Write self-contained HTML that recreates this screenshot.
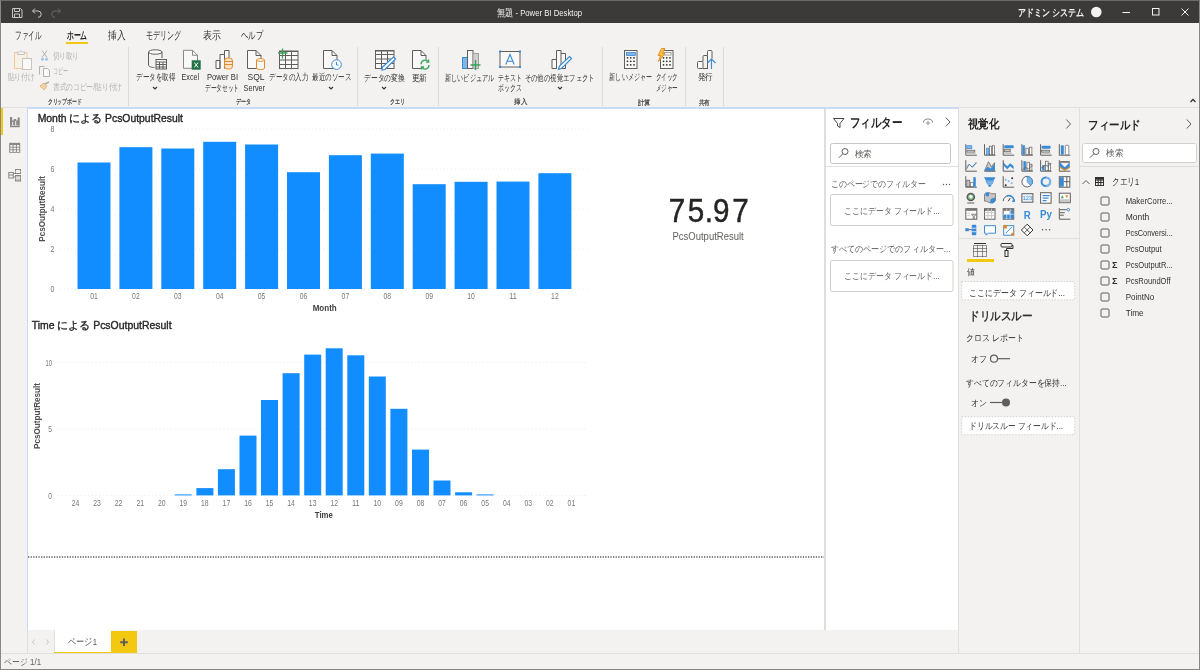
<!DOCTYPE html>
<html><head><meta charset="utf-8"><title>Power BI Desktop</title>
<style>
*{margin:0;padding:0;box-sizing:border-box}
html,body{width:1200px;height:670px;overflow:hidden;background:#f3f2f1;font-family:"Liberation Sans",sans-serif}
.a{position:absolute}
</style></head><body>
<div class="a" style="left:0px;top:0px;width:1200px;height:23px;background:#3b3a39;"></div><div class="a" style="left:0px;top:23px;width:1200px;height:85px;background:#f3f2f1;"></div><div class="a" style="left:0px;top:108px;width:28px;height:545px;background:#f3f2f1;"></div><div class="a" style="left:0px;top:107px;width:1200px;height:1px;background:#e1dfdd;"></div><div class="a" style="left:27px;top:107px;width:932px;height:2px;background:#cadcf4;"></div><div class="a" style="left:27px;top:108px;width:1px;height:522px;background:#c7dbf5;"></div><div class="a" style="left:28px;top:109px;width:797px;height:521px;background:#fff;"></div><div class="a" style="left:826px;top:109px;width:133px;height:521px;background:#fff;"></div><div class="a" style="left:824px;top:109px;width:2px;height:521px;background:#dfdedd;"></div><div class="a" style="left:958px;top:108px;width:1px;height:545px;background:#e1dfdd;"></div><div class="a" style="left:1079px;top:108px;width:1px;height:545px;background:#e1dfdd;"></div><div class="a" style="left:0px;top:653px;width:1200px;height:1px;background:#e1dfdd;"></div><div class="a" style="left:66px;top:42px;width:22px;height:2px;background:#f2c811;"></div><div class="a" style="left:128px;top:47px;width:1px;height:59px;background:#dcdad8;"></div><div class="a" style="left:357px;top:47px;width:1px;height:59px;background:#dcdad8;"></div><div class="a" style="left:438px;top:47px;width:1px;height:59px;background:#dcdad8;"></div><div class="a" style="left:602px;top:47px;width:1px;height:59px;background:#dcdad8;"></div><div class="a" style="left:685px;top:47px;width:1px;height:59px;background:#dcdad8;"></div><div class="a" style="left:723px;top:47px;width:1px;height:59px;background:#dcdad8;"></div><div class="a" style="left:1px;top:108px;width:2px;height:27px;background:#f2c811;"></div><div class="a" style="left:27px;top:630px;width:1px;height:23px;background:#e1dfdd;"></div><div class="a" style="left:54px;top:630px;width:57px;height:23px;background:#fff;"></div><div class="a" style="left:54px;top:630px;width:1px;height:23px;background:#e1dfdd;"></div><div class="a" style="left:54px;top:651.5px;width:57px;height:1.5px;background:#f2c811;"></div><div class="a" style="left:111px;top:631px;width:26px;height:22px;background:#f2c811;"></div>
<svg class="a" style="left:0;top:0;will-change:transform" width="1200" height="670" viewBox="0 0 1200 670" font-family="Liberation Sans"><g fill="none" stroke="#c8c6c4" stroke-width="1">
<path d="M12.5 8.5h8l1.5 1.5v7.5h-9.5z"/><path d="M14.5 8.5v3h5v-3"/><path d="M14.5 17.5v-3.5h5v3.5"/>
<path d="M35 10.5l-2.5 2.5 2.5 2.5M32.8 13h5.2a3.2 3.2 0 0 1 0 6.4" transform="translate(0 -2)"/>
</g>
<g fill="none" stroke="#6b6a69" stroke-width="1"><path d="M58 10.5l2.5 2.5-2.5 2.5M60.2 13h-5.2a3.2 3.2 0 0 0 0 6.4" transform="translate(0 -2)"/></g>
<circle cx="1096.3" cy="12" r="5.3" fill="#f3f2f1"/>
<g stroke="#f3f2f1" stroke-width="1" fill="none">
<path d="M1122.5 12.5h7.5"/><rect x="1152.5" y="8.5" width="6.5" height="6.5"/><path d="M1181.5 8.5l7 7M1188.5 8.5l-7 7"/>
</g>
<g fill="none" stroke="#323130" stroke-width="1.1"><path d="M153 87l2 2 2-2"/><path d="M329 87l2 2 2-2"/><path d="M382 87l2 2 2-2"/><path d="M558 87l2 2 2-2"/></g><path d="M1190.5 102l2.5-2.5 2.5 2.5" fill="none" stroke="#323130" stroke-width="1.3"/>

<g fill="none" stroke-width="1">
<!-- paste -->
<rect x="14.5" y="52.5" width="12.5" height="16" fill="#f8f1e6" stroke="#f2c999"/>
<path d="M17.5 54.5h7v-2.5h-2l-1.5-1.5-1.5 1.5h-2z" fill="#f3f2f1" stroke="#c8c6c4"/>
<rect x="22.5" y="58.5" width="9" height="11" fill="#faf9f8" stroke="#c8c6c4"/>
<!-- scissors -->
<path d="M42 50.5l5 7M47 50.5l-5 7" stroke="#b3b0ad"/>
<circle cx="42.5" cy="59.3" r="1.5" fill="#9fc3ea" stroke="none"/><circle cx="46.5" cy="59.3" r="1.5" fill="#9fc3ea" stroke="none"/>
<!-- copy -->
<path d="M39.5 74.5v-8h5" stroke="#b3b0ad"/><path d="M43.5 68.5h4l2 2v6h-6z" stroke="#b3b0ad" fill="#faf9f8"/>
<!-- format painter -->
<path d="M40 86l4-3 3 3-3 4z" fill="#f2d4a8" stroke="#eab676"/><path d="M45 84l4-2" stroke="#b3b0ad" stroke-width="1.5"/>
</g>
<g fill="none" stroke="#605e5c" stroke-width="1">
<!-- get data -->
<path d="M148.5 52v13c0 1.5 3 2.5 6 2.5" /><path d="M162 52v6"/><ellipse cx="155.25" cy="52" rx="6.75" ry="2.2" fill="#faf9f8"/>
<rect x="156" y="59.5" width="10.5" height="9.5" fill="#faf9f8"/>
<path d="M156 62h10.5M156 64.5h10.5M156 67h10.5M159.5 62v7M163 62v7"/>
<!-- excel -->
<path d="M183.5 50.3h9l5 5v13h-14z" fill="#faf9f8" stroke="#8a8886"/><path d="M192.5 50.3v5h5" stroke="#8a8886"/>
<rect x="191.7" y="60.3" width="9" height="9.4" fill="#1e7145" stroke="none"/>
<path d="M194.3 62.5l3.8 5M198.1 62.5l-3.8 5" stroke="#fff" stroke-width="1"/>
<!-- power bi dataset -->
<path d="M216 68.5v-8h4v8zM220 68.5v-14h4.5v14M224.5 57.5v-7h4.5v7.5" fill="#faf9f8"/>
<g stroke="#e38b2c"><rect x="224.5" y="58" width="8" height="11" rx="3" fill="#fbe5c8"/><path d="M224.5 61.5h8M224.5 64.5h8"/></g>
<!-- SQL -->
<path d="M247.5 50.5h8.5l5 5v13h-13.5z" fill="#faf9f8"/><path d="M256 50.5v5h5"/>
<g stroke="#e38b2c"><path d="M256.5 60v8c0 1 1.7 1.5 4 1.5s4-.5 4-1.5v-8" fill="#faf9f8"/><ellipse cx="260.5" cy="60" rx="4" ry="1.4" fill="#faf9f8"/></g>
<!-- enter data -->
<rect x="279.5" y="51" width="18.5" height="17.5" fill="#faf9f8"/>
<path d="M279.5 55.5h18.5M279.5 60h18.5M279.5 64.5h18.5M285.5 51v17.5M291.5 51v17.5"/>
<path d="M279.5 51.5h18.5" stroke="#605e5c"/>
<path d="M282.5 48.5v10M278 53h9.5" stroke="#38a25a" stroke-width="1.3"/>
<!-- recent sources -->
<path d="M323.5 50.5h8.5l5 5v13h-13.5z" fill="#faf9f8"/><path d="M332 50.5v5h5"/>
<circle cx="336.5" cy="64.6" r="4.8" fill="#fff" stroke="#3a8bd6"/><path d="M336.5 62v3h2" stroke="#3a8bd6"/>
<!-- transform -->
<rect x="375.5" y="50.5" width="18.5" height="18" fill="#faf9f8"/>
<path d="M375.5 54.5h18.5M375.5 59h18.5M375.5 63.5h18.5M381.5 50.5v18M387.5 50.5v18"/>
<path d="M375.5 51h18.5" stroke="#605e5c"/>
<path d="M393.5 57l2 2-10.5 10.5-3 .5.5-3z" fill="#fff" stroke="#3a8bd6" stroke-width="1.2"/>
<!-- refresh -->
<path d="M412.5 50.5h8.5l5 5v13h-13.5z" fill="#faf9f8"/><path d="M421 50.5v5h5"/>
<circle cx="425" cy="64.6" r="5.2" fill="#f3f2f1" stroke="none"/><g stroke="#38a25a" stroke-width="1.3"><path d="M421 64.2a4 4 0 0 1 7.2-2.4M429 65a4 4 0 0 1-7.2 2.4"/><path d="M428.6 59.6v2.6h-2.6M421.4 69.6v-2.6h2.6"/></g>
<!-- new visual -->
<rect x="462.5" y="57.5" width="5" height="11" fill="#7fb5ea" stroke="#3a8bd6"/>
<rect x="467.5" y="50.5" width="5.5" height="18" fill="#faf9f8"/>
<rect x="473" y="53.5" width="5.5" height="15" fill="#d2d0ce" stroke="#a19f9d"/>
<path d="M475.5 60v10M470.5 65h10" stroke="#38a25a" stroke-width="1.4"/>
<!-- textbox -->
<rect x="500" y="51.5" width="20" height="15.5" fill="#faf9f8" stroke="#605e5c"/>
<g fill="#3a8bd6" stroke="none"><rect x="499" y="50.5" width="2" height="2"/><rect x="519" y="50.5" width="2" height="2"/><rect x="499" y="66" width="2" height="2"/><rect x="519" y="66" width="2" height="2"/></g>
<path d="M505.8 64.5l4.2-10 4.2 10M507.2 61.2h5.6" stroke="#3a8bd6" stroke-width="1.1"/>
<!-- more visuals -->
<path d="M552 68.5v-9h4.5v9zM556.5 68.5v-18h4.5v18M561 53.5h4.5v15h-4.5" fill="#faf9f8"/>
<path d="M569.5 56.5l2 2-10 10-3 .8.8-3z" fill="#fff" stroke="#3a8bd6" stroke-width="1.2"/>
<!-- new measure -->
<rect x="624.5" y="50.5" width="12.5" height="18" fill="#faf9f8"/>
<rect x="626.3" y="52.5" width="9" height="3" fill="#7fb5ea" stroke="#3a8bd6" stroke-width=".8"/>
<g fill="#323130" stroke="none">
<circle cx="627.5" cy="57.8" r=".9"/><circle cx="630.75" cy="57.8" r=".9"/><circle cx="634" cy="57.8" r=".9"/>
<circle cx="627.5" cy="61.3" r=".9"/><circle cx="630.75" cy="61.3" r=".9"/><circle cx="634" cy="61.3" r=".9"/>
<circle cx="627.5" cy="64.8" r=".9"/><circle cx="630.75" cy="64.8" r=".9"/><circle cx="634" cy="64.8" r=".9"/></g>
<!-- quick measure -->
<rect x="660.5" y="50.5" width="12.5" height="18" fill="#faf9f8"/>
<rect x="664" y="52.5" width="7" height="2.5" fill="#fff" stroke="#8a8886" stroke-width=".8"/>
<g fill="#323130" stroke="none">
<circle cx="663.5" cy="57.8" r=".9"/><circle cx="666.75" cy="57.8" r=".9"/><circle cx="670" cy="57.8" r=".9"/>
<circle cx="663.5" cy="61.3" r=".9"/><circle cx="666.75" cy="61.3" r=".9"/><circle cx="670" cy="61.3" r=".9"/>
<circle cx="663.5" cy="64.8" r=".9"/><circle cx="666.75" cy="64.8" r=".9"/><circle cx="670" cy="64.8" r=".9"/></g>
<path d="M661.5 48.5h3.5l-2.5 5h2.5l-6.5 8 2-6h-2.5z" fill="#f9c23c" stroke="#e38b2c" stroke-width=".9"/>
<!-- publish -->
<rect x="697.5" y="61.5" width="5.5" height="7" rx="1" fill="#faf9f8"/><path d="M703 61.5v-5a1 1 0 0 1 1-1h3.5M703 68.5h5" /><path d="M707.5 55.5v-4a1 1 0 0 1 1-1h2.5a1 1 0 0 1 1 1v7" fill="#faf9f8"/><path d="M707.5 55.5v13"/>
<path d="M711.5 69v-9.5M707.5 63l4-4 4 4" stroke="#3a8bd6" stroke-width="1.1"/>
</g>
<g fill="#8a8886" stroke="none">
<path d="M10 117h2.2v3.5h1.5v-1.5h2.5v1.5h1.5v-3h2v9.8h-9.7z"/>
<g fill="#f3f2f1"><rect x="12.2" y="122" width="1" height="3.5"/><rect x="15.2" y="121" width="1" height="4.5"/><rect x="11" y="125" width="7.7" height=".8" opacity=".6"/></g>
<rect x="9.2" y="142.8" width="11" height="10" fill="#8a8886"/>
<g fill="#f3f2f1"><rect x="10.3" y="145" width="2.3" height="1.8"/><rect x="13.6" y="145" width="2.3" height="1.8"/><rect x="16.9" y="145" width="2.3" height="1.8"/>
<rect x="10.3" y="147.6" width="2.3" height="1.8"/><rect x="13.6" y="147.6" width="2.3" height="1.8"/><rect x="16.9" y="147.6" width="2.3" height="1.8"/>
<rect x="10.3" y="150.2" width="2.3" height="1.8"/><rect x="13.6" y="150.2" width="2.3" height="1.8"/><rect x="16.9" y="150.2" width="2.3" height="1.8"/></g>
</g>
<g fill="none" stroke="#8a8886" stroke-width="1">
<rect x="15.5" y="169.5" width="5" height="4"/><rect x="8.8" y="172.5" width="4.5" height="5.5"/><path d="M8.8 175h4.5M13.3 173.5h2.2M13.3 177h2.2"/>
<rect x="15.5" y="175.5" width="5" height="5.5" fill="#c8c6c4"/><path d="M15.5 171.5h5M15.5 178h5" stroke="#f3f2f1"/>
</g>
<g stroke="#ebebeb" stroke-width="1" stroke-dasharray="1 2.76"><line x1="60" x2="589" y1="129" y2="129"/><line x1="60" x2="589" y1="169" y2="169"/><line x1="60" x2="589" y1="209" y2="209"/><line x1="60" x2="589" y1="249" y2="249"/><line x1="60" x2="589" y1="289" y2="289"/><line x1="58" x2="587" y1="362.5" y2="362.5"/><line x1="58" x2="587" y1="429" y2="429"/><line x1="58" x2="587" y1="495.5" y2="495.5"/></g>
<g fill="#118dff"><rect x="77.5" y="162.5" width="33" height="126.5"/><rect x="119.4" y="147.2" width="33" height="141.8"/><rect x="161.3" y="148.5" width="33" height="140.5"/><rect x="203.2" y="141.8" width="33" height="147.2"/><rect x="245.1" y="144.5" width="33" height="144.5"/><rect x="287.0" y="172.2" width="33" height="116.8"/><rect x="328.9" y="155.2" width="33" height="133.8"/><rect x="370.8" y="153.6" width="33" height="135.4"/><rect x="412.7" y="184.2" width="33" height="104.8"/><rect x="454.6" y="181.8" width="33" height="107.2"/><rect x="496.5" y="181.6" width="33" height="107.4"/><rect x="538.4" y="173.2" width="33" height="115.8"/><rect x="174.8" y="494.4" width="17" height="1.0"/><rect x="196.4" y="488.1" width="17" height="7.3"/><rect x="217.9" y="469.2" width="17" height="26.2"/><rect x="239.5" y="435.6" width="17" height="59.8"/><rect x="261.0" y="400.0" width="17" height="95.4"/><rect x="282.6" y="373.2" width="17" height="122.2"/><rect x="304.2" y="354.6" width="17" height="140.8"/><rect x="325.7" y="348.3" width="17" height="147.1"/><rect x="347.3" y="355.3" width="17" height="140.1"/><rect x="368.8" y="376.5" width="17" height="118.9"/><rect x="390.4" y="408.8" width="17" height="86.6"/><rect x="412.0" y="449.6" width="17" height="45.8"/><rect x="433.5" y="480.5" width="17" height="14.9"/><rect x="455.1" y="492.3" width="17" height="3.1"/><rect x="476.6" y="494.4" width="17" height="1.0"/></g>
<g stroke="#5f5e5d" stroke-width="1.3" stroke-dasharray="1.3 1.3"><line x1="28" x2="824" y1="557" y2="557"/></g>
<g fill="none" stroke="#323130" stroke-width="1">
<path d="M833.5 118.5h10.5l-4 5v4l-2.5-1.5v-2.5z" stroke="#484644"/>
</g>
<g fill="none" stroke="#8a8886" stroke-width="1">
<path d="M923.5 122.5a4.5 3.5 0 0 1 9 0"/><circle cx="928" cy="123" r="1.2"/>
<path d="M945.8 117.5l4.2 4.5-4.2 4.5" stroke="#605e5c"/>
</g>
<rect x="830.5" y="143.5" width="120" height="20" rx="2" fill="#fff" stroke="#c8c6c4"/>
<g fill="none" stroke="#605e5c" stroke-width="1"><circle cx="845" cy="151.5" r="3"/><path d="M842.8 153.8l-4 4"/></g>
<rect x="826" y="166" width="133" height="1" fill="#e1dfdd"/>
<rect x="830.5" y="194.5" width="122.5" height="31" rx="2" fill="#fff" stroke="#d2d0ce"/>
<rect x="830.5" y="260.5" width="122.5" height="31" rx="2" fill="#fff" stroke="#d2d0ce"/>
<g fill="#605e5c"><circle cx="943.5" cy="184.5" r=".7"/><circle cx="946.5" cy="184.5" r=".7"/><circle cx="949.5" cy="184.5" r=".7"/></g>

<path d="M1066.3 119.5l4.2 4.5-4.2 4.5" fill="none" stroke="#605e5c"/>
<g transform="translate(965.3 144.2)" fill="none" stroke-width="1"><path d="M.5 0v11h11" stroke="#605e5c"/><rect x="1.5" y="1.5" width="5" height="3" fill="#7fb5ea" stroke="#3a8bd6" stroke-width=".7"/><rect x="1.5" y="6" width="8" height="2" fill="#c8c6c4" stroke="#605e5c" stroke-width=".7"/><rect x="1.5" y="8.5" width="9" height="1.5" fill="#c8c6c4"/></g><g transform="translate(984.0 144.2)" fill="none" stroke-width="1"><path d="M.5 0v11h11" stroke="#605e5c"/><rect x="2.5" y="4" width="2.5" height="6.5" fill="#7fb5ea" stroke="#3a8bd6" stroke-width=".7"/><rect x="5.5" y="2" width="2" height="8.5" fill="#fff" stroke="#605e5c" stroke-width=".7"/><rect x="8.5" y="1.5" width="2" height="9" fill="#fff" stroke="#605e5c" stroke-width=".7"/></g><g transform="translate(1002.7 144.2)" fill="none" stroke-width="1"><path d="M.5 0v11h11" stroke="#605e5c"/><rect x="1.5" y="1" width="9.5" height="3" rx="1" fill="#3a8bd6"/><rect x="1.5" y="5" width="6" height="2.5" fill="#c8c6c4" stroke="#605e5c" stroke-width=".7"/><rect x="1.5" y="8" width="7.5" height="2" fill="#c8c6c4"/></g><g transform="translate(1021.4 144.2)" fill="none" stroke-width="1"><path d="M.5 0v11h11" stroke="#605e5c"/><rect x="1" y="1" width="2.5" height="9.5" fill="#3a8bd6"/><rect x="4.5" y="4" width="2.5" height="6.5" fill="#fff" stroke="#605e5c" stroke-width=".7"/><rect x="8" y="3" width="2.5" height="7.5" fill="#fff" stroke="#605e5c" stroke-width=".7"/></g><g transform="translate(1040.1 144.2)" fill="none" stroke-width="1"><path d="M.5 0v11h11" stroke="#605e5c"/><rect x="1.5" y="1.5" width="9" height="3" rx="1" fill="#3a8bd6"/><rect x="1.5" y="6" width="8" height="2" fill="#c8c6c4" stroke="#605e5c" stroke-width=".7"/><rect x="1.5" y="8.5" width="9" height="1.5" fill="#c8c6c4"/></g><g transform="translate(1058.8 144.2)" fill="none" stroke-width="1"><path d="M.5 0v11h11" stroke="#605e5c"/><rect x="2" y="1" width="3" height="9.5" rx="1" fill="#3a8bd6"/><rect x="6.5" y="1" width="3.5" height="9.5" rx="1" fill="#fff" stroke="#605e5c" stroke-width=".7"/></g><g transform="translate(965.3 160.2)" fill="none" stroke-width="1"><path d="M.5 0v11h11" stroke="#605e5c"/><path d="M1 9l3-5 3 3 4-5" stroke="#605e5c" stroke-width=".8"/><path d="M1 7l3-3 3 3 4-4" stroke="#3a8bd6" stroke-width=".8"/></g><g transform="translate(984.0 160.2)" fill="none" stroke-width="1"><path d="M.5 11h11" stroke="#605e5c"/><path d="M.5 10.5l4-9 3 5 3-4v8z" fill="#c8c6c4" stroke="#605e5c" stroke-width=".7"/><path d="M.5 10.5l3-4 3 2 4-5v7z" fill="#3a8bd6"/></g><g transform="translate(1002.7 160.2)" fill="none" stroke-width="1"><path d="M.5 11h11" stroke="#605e5c"/><path d="M.5 2l4 4 3-3 3.5 3v3l-3.5-3-3 3-4-4z" fill="#3a8bd6"/><path d="M.5 0v11" stroke="#605e5c"/></g><g transform="translate(1021.4 160.2)" fill="none" stroke-width="1"><path d="M.5 0v11h11" stroke="#605e5c"/><rect x="2" y="1" width="2.5" height="9.5" fill="#3a8bd6"/><rect x="5.5" y="2" width="2.5" height="8.5" fill="#fff" stroke="#605e5c" stroke-width=".7"/><rect x="8.5" y="4" width="2" height="6.5" fill="#fff" stroke="#605e5c" stroke-width=".7"/><path d="M1 10l3-3 3 2 4-4" stroke="#605e5c" stroke-width=".8"/></g><g transform="translate(1040.1 160.2)" fill="none" stroke-width="1"><path d="M.5 0v11h11" stroke="#605e5c"/><rect x="2" y="5" width="2.5" height="5.5" fill="#3a8bd6"/><rect x="5.5" y="1" width="2.5" height="9.5" fill="#fff" stroke="#605e5c" stroke-width=".7"/><rect x="8.5" y="3" width="2" height="7.5" fill="#fff" stroke="#605e5c" stroke-width=".7"/><path d="M1 8l4-3 3 1 3-3" stroke="#605e5c" stroke-width=".8"/></g><g transform="translate(1058.8 160.2)" fill="none" stroke-width="1"><path d="M.5 0v11h11" stroke="#605e5c"/><path d="M1 2l5 5 5-5v5l-5 3-5-3z" fill="#3a8bd6"/><path d="M1 7l5 3 5-3" stroke="#e38b2c" stroke-width="1.2"/><rect x="1" y="1" width="10" height="1.5" fill="#605e5c"/></g><g transform="translate(965.3 176.2)" fill="none" stroke-width="1"><path d="M.5 0v11h11" stroke="#605e5c"/><rect x="1.5" y="4" width="3" height="6.5" fill="#c8c6c4" stroke="#605e5c" stroke-width=".7"/><rect x="5" y="6.5" width="3" height="4" fill="#fff" stroke="#605e5c" stroke-width=".7"/><rect x="8" y="1" width="2.5" height="9.5" fill="#3a8bd6"/></g><g transform="translate(984.0 176.2)" fill="none" stroke-width="1"><path d="M0 1h11.5l-2 3.5h-7.5z" fill="#3a8bd6"/><path d="M2 5h7.5l-1.5 3h-4.5z" fill="#7fb5ea" stroke="#3a8bd6" stroke-width=".6"/><path d="M4 8.5h3.5l-.8 2h-2z" fill="#3a8bd6"/></g><g transform="translate(1002.7 176.2)" fill="none" stroke-width="1"><path d="M.5 0v11h11" stroke="#605e5c"/><circle cx="3" cy="3.5" r="1" fill="#7fb5ea"/><circle cx="6" cy="5" r="1" fill="#7fb5ea"/><circle cx="9" cy="7" r="1" fill="#7fb5ea"/><circle cx="9.5" cy="2" r="1" fill="#323130"/><circle cx="3" cy="9" r="1" fill="#323130"/></g><g transform="translate(1021.4 176.2)" fill="none" stroke-width="1"><circle cx="5.8" cy="5.5" r="5.3" fill="#fff" stroke="#605e5c"/><path d="M5.8 .2a5.3 5.3 0 0 1 3.5 9.3L5.8 5.5z" fill="#7fb5ea" stroke="#3a8bd6" stroke-width=".7"/></g><g transform="translate(1040.1 176.2)" fill="none" stroke-width="1"><circle cx="5.8" cy="5.5" r="4.3" fill="none" stroke="#3a8bd6" stroke-width="2"/><path d="M5.8 1.2a4.3 4.3 0 0 1 0 8.6" fill="none" stroke="#7fb5ea" stroke-width="2"/></g><g transform="translate(1058.8 176.2)" fill="none" stroke-width="1"><rect x=".5" y=".5" width="10.5" height="10.5" fill="#fff" stroke="#605e5c"/><rect x="1" y="1" width="4" height="9.5" fill="#3a8bd6"/><path d="M5 5.5h6M8 .5v10.5" stroke="#605e5c"/></g><g transform="translate(965.3 192.2)" fill="none" stroke-width="1"><circle cx="5.5" cy="4.8" r="4.3" fill="#5a5a5a"/><circle cx="5.5" cy="4.8" r="2.8" fill="#7fc28e"/><path d="M3.5 4l2-1.5 2 2-2 2z" fill="#fff"/><path d="M2 10.8h7" stroke="#605e5c"/></g><g transform="translate(984.0 192.2)" fill="none" stroke-width="1"><path d="M.5 2l2-1.5h3l2 1h4v7l-2 2h-4l-3-1.5-2 0z" fill="#c8c6c4" stroke="#605e5c" stroke-width=".7"/><path d="M1 .5h4v3.5h-3z" fill="#3a8bd6"/><path d="M6.5 7l4.5-2v4l-2 2h-3z" fill="#3a8bd6"/></g><g transform="translate(1002.7 192.2)" fill="none" stroke-width="1"><path d="M.5 9a5.5 5.5 0 0 1 11 0" fill="none" stroke="#605e5c"/><path d="M4 3.8a5.5 5.5 0 0 1 7.5 5.2h-2" fill="none" stroke="#3a8bd6" stroke-width="1.5"/><path d="M5.5 9l2-3" stroke="#323130"/></g><g transform="translate(1021.4 192.2)" fill="none" stroke-width="1"><rect x=".5" y="1.5" width="11" height="8.5" fill="#e8f1fb" stroke="#605e5c"/><text x="6" y="8.2" font-size="5.5" text-anchor="middle" fill="#3a8bd6">123</text></g><g transform="translate(1040.1 192.2)" fill="none" stroke-width="1"><rect x=".5" y=".5" width="10.5" height="10.5" fill="#fff" stroke="#605e5c"/><path d="M2.5 3.5h7M2.5 6h6M2.5 8.5h4" stroke="#3a8bd6" stroke-width="1.2"/></g><g transform="translate(1058.8 192.2)" fill="none" stroke-width="1"><rect x=".5" y="1" width="11" height="9.5" fill="#fff" stroke="#605e5c"/><path d="M2 6l1.5-3 1.5 3z" fill="#38a25a"/><path d="M6.5 3h3l-1.5 3z" fill="#e38b2c"/><rect x="1" y="7" width="10" height="3" fill="#c8c6c4"/></g><g transform="translate(965.3 208.2)" fill="none" stroke-width="1"><rect x=".5" y=".5" width="11" height="10.5" fill="#fff" stroke="#605e5c"/><rect x="1" y="1" width="10" height="1.5" fill="#605e5c"/><path d="M2 5h3M2 7.5h3" stroke="#c8c6c4"/><path d="M6 6h5l-2 2.5v2.5l-1-.5v-2z" fill="#c8c6c4" stroke="#605e5c" stroke-width=".6"/></g><g transform="translate(984.0 208.2)" fill="none" stroke-width="1"><rect x=".5" y=".5" width="10.5" height="10.5" fill="#fff" stroke="#605e5c"/><rect x="1" y="1" width="9.5" height="1.5" fill="#605e5c"/><path d="M.5 4.5h10.5M.5 7.5h10.5M4 .5v10.5M7.5 .5v10.5" stroke="#c8c6c4"/></g><g transform="translate(1002.7 208.2)" fill="none" stroke-width="1"><rect x=".5" y=".5" width="10.5" height="10.5" fill="#fff" stroke="#605e5c"/><rect x="1" y="1" width="9.5" height="1.5" fill="#605e5c"/><rect x="1" y="6" width="9.5" height="4.5" fill="#3a8bd6"/><rect x="7" y="2.5" width="3.5" height="8" fill="#3a8bd6"/><path d="M.5 6h10.5M4 .5v10.5M7.5 .5v10.5" stroke="#fff" stroke-width=".6"/></g><g transform="translate(1021.4 208.2)" fill="none" stroke-width="1"><text x="5.8" y="10.5" font-size="11" font-weight="bold" text-anchor="middle" fill="#3a8bd6" textLength="7" lengthAdjust="spacingAndGlyphs">R</text></g><g transform="translate(1040.1 208.2)" fill="none" stroke-width="1"><text x="5.8" y="9.5" font-size="10.5" font-weight="bold" text-anchor="middle" fill="#3a8bd6" textLength="12" lengthAdjust="spacingAndGlyphs">Py</text></g><g transform="translate(1058.8 208.2)" fill="none" stroke-width="1"><path d="M.5 0v11h11" stroke="#605e5c"/><path d="M1 1.5h7M1 4.5h5M1 7h4" stroke="#605e5c"/><circle cx="9.5" cy="1.5" r="1.3" fill="#fff" stroke="#3a8bd6"/></g><g transform="translate(965.3 224.2)" fill="none" stroke-width="1"><rect x="0" y="4" width="3.5" height="3" fill="#3a8bd6"/><path d="M3.5 5.5h3" stroke="#605e5c"/><rect x="6.5" y=".5" width="4.5" height="10.5" rx="1" fill="#3a8bd6"/><path d="M6.5 4h4.5M6.5 7.5h4.5" stroke="#fff" stroke-width=".7"/></g><g transform="translate(984.0 224.2)" fill="none" stroke-width="1"><path d="M.5 1.5h11v7.5h-7l-2.5 2v-2h-1.5z" fill="#fff" stroke="#3a8bd6"/></g><g transform="translate(1002.7 224.2)" fill="none" stroke-width="1"><rect x="1" y="1.5" width="10" height="9.5" fill="#fff" stroke="#3a8bd6"/><path d="M3 9l6-6" stroke="#3a8bd6"/><circle cx="2.5" cy="2.5" r="2" fill="#e38b2c"/><circle cx="10" cy="10" r="1.6" fill="#e38b2c"/><circle cx="11" cy="7" r=".8" fill="#e38b2c"/></g><g transform="translate(1021.4 224.2)" fill="none" stroke-width="1"><path d="M5.8 0l5.8 5.8-5.8 5.8L0 5.8z" fill="#fff" stroke="#323130"/><path d="M3 3l5.6 5.6M8.6 3L3 8.6" stroke="#323130" stroke-width=".8"/></g><g transform="translate(1040.1 224.2)" fill="none" stroke-width="1"><circle cx="2.5" cy="5.5" r=".8" fill="#605e5c"/><circle cx="6" cy="5.5" r=".8" fill="#605e5c"/><circle cx="9.5" cy="5.5" r=".8" fill="#605e5c"/></g>
<rect x="959" y="238" width="120" height="1" fill="#e1dfdd"/>
<g fill="none" stroke="#323130" stroke-width="1" stroke-dasharray="1 1">
<rect x="973.5" y="245.5" width="13" height="11"/>
<path d="M973.5 248.5h13M973.5 251.5h13M977.5 245.5v11M982.5 245.5v11"/>
</g>
<path d="M974 243.5h12" stroke="#323130"/>
<g fill="none" stroke="#323130" stroke-width="1">
<rect x="1001" y="243.5" width="11" height="3.5" rx="1"/><path d="M1012 245.5h1v3h-6.5v2"/><rect x="1005" y="250.5" width="3" height="6"/>
</g>
<rect x="967" y="259" width="27" height="3" fill="#f2c811"/>
<rect x="961.7" y="281.5" width="113" height="18.3" fill="#fff" stroke="#d2d0ce" stroke-dasharray="1.5 1.5"/>
<rect x="961.7" y="416.7" width="113" height="18" fill="#fff" stroke="#d2d0ce" stroke-dasharray="1.5 1.5"/>
<g stroke="#605e5c" stroke-width="1.2" fill="none">
<circle cx="994" cy="358.7" r="3.5"/><path d="M997.5 358.7h12.5"/>
<path d="M990 402.5h12"/></g>
<circle cx="1006" cy="402.5" r="4" fill="#605e5c"/>

<path d="M1186.8 119.5l4.2 4.5-4.2 4.5" fill="none" stroke="#605e5c"/>
<rect x="1082.5" y="143.5" width="114" height="19" rx="2" fill="#fff" stroke="#d2d0ce"/>
<g fill="none" stroke="#605e5c" stroke-width="1"><circle cx="1096" cy="151.5" r="3"/><path d="M1093.8 153.8l-4 4"/></g>
<rect x="1080" y="166" width="119" height="1" fill="#e1dfdd"/>
<path d="M1082.5 184l3.5-3.5 3.5 3.5" fill="none" stroke="#605e5c"/>
<g fill="none" stroke="#323130" stroke-width="1"><rect x="1095.5" y="177.5" width="8" height="8"/><path d="M1095.5 180h8M1095.5 182.5h8M1098.2 177.5v8M1100.8 177.5v8"/></g>
<rect x="1095.5" y="177.5" width="8" height="2" fill="#323130"/>

<rect x="1101" y="197.0" width="8" height="8" rx="1" fill="none" stroke="#605e5c"/><rect x="1101" y="213.0" width="8" height="8" rx="1" fill="none" stroke="#605e5c"/><rect x="1101" y="229.0" width="8" height="8" rx="1" fill="none" stroke="#605e5c"/><rect x="1101" y="245.0" width="8" height="8" rx="1" fill="none" stroke="#605e5c"/><rect x="1101" y="261.0" width="8" height="8" rx="1" fill="none" stroke="#605e5c"/><text x="1112" y="268.3" font-size="9" font-weight="bold" fill="#323130">Σ</text><rect x="1101" y="277.0" width="8" height="8" rx="1" fill="none" stroke="#605e5c"/><text x="1112" y="284.3" font-size="9" font-weight="bold" fill="#323130">Σ</text><rect x="1101" y="293.0" width="8" height="8" rx="1" fill="none" stroke="#605e5c"/><rect x="1101" y="309.0" width="8" height="8" rx="1" fill="none" stroke="#605e5c"/>
<g fill="none" stroke="#c8c6c4" stroke-width="1"><path d="M34.5 639.5l-2 2.5 2 2.5M46.5 639.5l2 2.5-2 2.5"/></g>
<path d="M124 638.5v7.5M120.2 642.2h7.6" stroke="#605e5c" stroke-width="2"/>
<g><text x="497.00" y="15.92" font-size="9.5" fill="#f3f2f1" textLength="85.00" lengthAdjust="spacingAndGlyphs">無題 - Power BI Desktop</text>
<text x="1018.00" y="15.80" font-size="10" fill="#f3f2f1" font-weight="bold" textLength="66.00" lengthAdjust="spacingAndGlyphs">アドミン システム</text>
<text x="15.40" y="38.78" font-size="10.5" fill="#323130" textLength="26.20" lengthAdjust="spacingAndGlyphs">ファイル</text>
<text x="66.70" y="38.78" font-size="10.5" fill="#252423" font-weight="bold" textLength="20.60" lengthAdjust="spacingAndGlyphs">ホーム</text>
<text x="108.00" y="38.78" font-size="10.5" fill="#323130" textLength="17.50" lengthAdjust="spacingAndGlyphs">挿入</text>
<text x="146.00" y="38.78" font-size="10.5" fill="#323130" textLength="35.00" lengthAdjust="spacingAndGlyphs">モデリング</text>
<text x="202.50" y="38.78" font-size="10.5" fill="#323130" textLength="18.00" lengthAdjust="spacingAndGlyphs">表示</text>
<text x="241.00" y="38.78" font-size="10.5" fill="#323130" textLength="22.00" lengthAdjust="spacingAndGlyphs">ヘルプ</text>
<text x="7.60" y="79.74" font-size="9" fill="#b3b0ad" textLength="27.40" lengthAdjust="spacingAndGlyphs">貼り付け</text>
<text x="52.80" y="58.84" font-size="9" fill="#b3b0ad" textLength="26.20" lengthAdjust="spacingAndGlyphs">切り取り</text>
<text x="52.80" y="74.24" font-size="9" fill="#b3b0ad" textLength="15.20" lengthAdjust="spacingAndGlyphs">コピー</text>
<text x="52.80" y="90.34" font-size="9" fill="#b3b0ad" textLength="69.20" lengthAdjust="spacingAndGlyphs">書式のコピー/貼り付け</text>
<text x="47.70" y="104.02" font-size="7" fill="#3b3a39" stroke="#3b3a39" stroke-width="0.2" textLength="34.30" lengthAdjust="spacingAndGlyphs">クリップボード</text>
<text x="136.00" y="80.24" font-size="9" fill="#323130" textLength="39.00" lengthAdjust="spacingAndGlyphs">データを取得</text>
<text x="181.60" y="80.24" font-size="9" fill="#323130" textLength="17.40" lengthAdjust="spacingAndGlyphs">Excel</text>
<text x="207.00" y="80.24" font-size="9" fill="#323130" textLength="31.00" lengthAdjust="spacingAndGlyphs">Power BI</text>
<text x="205.00" y="90.84" font-size="9" fill="#323130" textLength="34.00" lengthAdjust="spacingAndGlyphs">データセット</text>
<text x="247.50" y="80.24" font-size="9" fill="#323130" textLength="17.00" lengthAdjust="spacingAndGlyphs">SQL</text>
<text x="243.60" y="90.84" font-size="9" fill="#323130" textLength="21.40" lengthAdjust="spacingAndGlyphs">Server</text>
<text x="269.00" y="80.24" font-size="9" fill="#323130" textLength="39.00" lengthAdjust="spacingAndGlyphs">データの入力</text>
<text x="312.00" y="80.24" font-size="9" fill="#323130" textLength="39.00" lengthAdjust="spacingAndGlyphs">最近のソース</text>
<text x="236.00" y="104.32" font-size="7" fill="#3b3a39" stroke="#3b3a39" stroke-width="0.2" textLength="15.00" lengthAdjust="spacingAndGlyphs">データ</text>
<text x="364.00" y="80.54" font-size="9" fill="#323130" textLength="40.60" lengthAdjust="spacingAndGlyphs">データの変換</text>
<text x="411.70" y="80.54" font-size="9" fill="#323130" textLength="15.30" lengthAdjust="spacingAndGlyphs">更新</text>
<text x="390.00" y="104.32" font-size="7" fill="#3b3a39" stroke="#3b3a39" stroke-width="0.2" textLength="15.00" lengthAdjust="spacingAndGlyphs">クエリ</text>
<text x="445.00" y="80.54" font-size="9" fill="#323130" textLength="49.00" lengthAdjust="spacingAndGlyphs">新しいビジュアル</text>
<text x="498.00" y="80.54" font-size="9" fill="#323130" textLength="23.70" lengthAdjust="spacingAndGlyphs">テキスト</text>
<text x="498.30" y="91.24" font-size="9" fill="#323130" textLength="23.40" lengthAdjust="spacingAndGlyphs">ボックス</text>
<text x="524.80" y="80.54" font-size="9" fill="#323130" textLength="69.80" lengthAdjust="spacingAndGlyphs">その他の視覚エフェクト</text>
<text x="514.00" y="104.32" font-size="7" fill="#3b3a39" stroke="#3b3a39" stroke-width="0.2" textLength="13.00" lengthAdjust="spacingAndGlyphs">挿入</text>
<text x="609.40" y="80.24" font-size="9" fill="#323130" textLength="42.50" lengthAdjust="spacingAndGlyphs">新しいメジャー</text>
<text x="655.60" y="80.24" font-size="9" fill="#323130" textLength="22.40" lengthAdjust="spacingAndGlyphs">クイック</text>
<text x="655.60" y="90.74" font-size="9" fill="#323130" textLength="22.40" lengthAdjust="spacingAndGlyphs">メジャー</text>
<text x="638.00" y="104.52" font-size="7" fill="#3b3a39" stroke="#3b3a39" stroke-width="0.2" textLength="12.60" lengthAdjust="spacingAndGlyphs">計算</text>
<text x="697.50" y="80.24" font-size="9" fill="#323130" textLength="15.00" lengthAdjust="spacingAndGlyphs">発行</text>
<text x="698.75" y="104.52" font-size="7" fill="#3b3a39" stroke="#3b3a39" stroke-width="0.2" textLength="11.25" lengthAdjust="spacingAndGlyphs">共有</text>
<text x="50.60" y="131.95" font-size="8.2" fill="#777" textLength="3.90" lengthAdjust="spacingAndGlyphs">8</text>
<text x="50.60" y="171.95" font-size="8.2" fill="#777" textLength="3.90" lengthAdjust="spacingAndGlyphs">6</text>
<text x="50.60" y="211.95" font-size="8.2" fill="#777" textLength="3.90" lengthAdjust="spacingAndGlyphs">4</text>
<text x="50.60" y="251.95" font-size="8.2" fill="#777" textLength="3.90" lengthAdjust="spacingAndGlyphs">2</text>
<text x="50.60" y="291.95" font-size="8.2" fill="#777" textLength="3.90" lengthAdjust="spacingAndGlyphs">0</text>
<text x="45.50" y="365.55" font-size="8.2" fill="#777" textLength="6.50" lengthAdjust="spacingAndGlyphs">10</text>
<text x="48.30" y="431.95" font-size="8.2" fill="#777" textLength="3.70" lengthAdjust="spacingAndGlyphs">5</text>
<text x="48.30" y="498.75" font-size="8.2" fill="#777" textLength="3.70" lengthAdjust="spacingAndGlyphs">0</text>
<text x="90.20" y="298.95" font-size="8.2" fill="#777" textLength="7.60" lengthAdjust="spacingAndGlyphs">01</text>
<text x="132.10" y="298.95" font-size="8.2" fill="#777" textLength="7.60" lengthAdjust="spacingAndGlyphs">02</text>
<text x="174.00" y="298.95" font-size="8.2" fill="#777" textLength="7.60" lengthAdjust="spacingAndGlyphs">03</text>
<text x="215.90" y="298.95" font-size="8.2" fill="#777" textLength="7.60" lengthAdjust="spacingAndGlyphs">04</text>
<text x="257.80" y="298.95" font-size="8.2" fill="#777" textLength="7.60" lengthAdjust="spacingAndGlyphs">05</text>
<text x="299.70" y="298.95" font-size="8.2" fill="#777" textLength="7.60" lengthAdjust="spacingAndGlyphs">06</text>
<text x="341.60" y="298.95" font-size="8.2" fill="#777" textLength="7.60" lengthAdjust="spacingAndGlyphs">07</text>
<text x="383.50" y="298.95" font-size="8.2" fill="#777" textLength="7.60" lengthAdjust="spacingAndGlyphs">08</text>
<text x="425.40" y="298.95" font-size="8.2" fill="#777" textLength="7.60" lengthAdjust="spacingAndGlyphs">09</text>
<text x="467.30" y="298.95" font-size="8.2" fill="#777" textLength="7.60" lengthAdjust="spacingAndGlyphs">10</text>
<text x="509.20" y="298.95" font-size="8.2" fill="#777" textLength="7.60" lengthAdjust="spacingAndGlyphs">11</text>
<text x="551.10" y="298.95" font-size="8.2" fill="#777" textLength="7.60" lengthAdjust="spacingAndGlyphs">12</text>
<text x="71.70" y="505.95" font-size="8.2" fill="#777" textLength="7.60" lengthAdjust="spacingAndGlyphs">24</text>
<text x="93.26" y="505.95" font-size="8.2" fill="#777" textLength="7.60" lengthAdjust="spacingAndGlyphs">23</text>
<text x="114.82" y="505.95" font-size="8.2" fill="#777" textLength="7.60" lengthAdjust="spacingAndGlyphs">22</text>
<text x="136.38" y="505.95" font-size="8.2" fill="#777" textLength="7.60" lengthAdjust="spacingAndGlyphs">21</text>
<text x="157.94" y="505.95" font-size="8.2" fill="#777" textLength="7.60" lengthAdjust="spacingAndGlyphs">20</text>
<text x="179.50" y="505.95" font-size="8.2" fill="#777" textLength="7.60" lengthAdjust="spacingAndGlyphs">19</text>
<text x="201.06" y="505.95" font-size="8.2" fill="#777" textLength="7.60" lengthAdjust="spacingAndGlyphs">18</text>
<text x="222.62" y="505.95" font-size="8.2" fill="#777" textLength="7.60" lengthAdjust="spacingAndGlyphs">17</text>
<text x="244.18" y="505.95" font-size="8.2" fill="#777" textLength="7.60" lengthAdjust="spacingAndGlyphs">16</text>
<text x="265.74" y="505.95" font-size="8.2" fill="#777" textLength="7.60" lengthAdjust="spacingAndGlyphs">15</text>
<text x="287.30" y="505.95" font-size="8.2" fill="#777" textLength="7.60" lengthAdjust="spacingAndGlyphs">14</text>
<text x="308.86" y="505.95" font-size="8.2" fill="#777" textLength="7.60" lengthAdjust="spacingAndGlyphs">13</text>
<text x="330.42" y="505.95" font-size="8.2" fill="#777" textLength="7.60" lengthAdjust="spacingAndGlyphs">12</text>
<text x="351.98" y="505.95" font-size="8.2" fill="#777" textLength="7.60" lengthAdjust="spacingAndGlyphs">11</text>
<text x="373.54" y="505.95" font-size="8.2" fill="#777" textLength="7.60" lengthAdjust="spacingAndGlyphs">10</text>
<text x="395.10" y="505.95" font-size="8.2" fill="#777" textLength="7.60" lengthAdjust="spacingAndGlyphs">09</text>
<text x="416.66" y="505.95" font-size="8.2" fill="#777" textLength="7.60" lengthAdjust="spacingAndGlyphs">08</text>
<text x="438.22" y="505.95" font-size="8.2" fill="#777" textLength="7.60" lengthAdjust="spacingAndGlyphs">07</text>
<text x="459.78" y="505.95" font-size="8.2" fill="#777" textLength="7.60" lengthAdjust="spacingAndGlyphs">06</text>
<text x="481.34" y="505.95" font-size="8.2" fill="#777" textLength="7.60" lengthAdjust="spacingAndGlyphs">05</text>
<text x="502.90" y="505.95" font-size="8.2" fill="#777" textLength="7.60" lengthAdjust="spacingAndGlyphs">04</text>
<text x="524.46" y="505.95" font-size="8.2" fill="#777" textLength="7.60" lengthAdjust="spacingAndGlyphs">03</text>
<text x="546.02" y="505.95" font-size="8.2" fill="#777" textLength="7.60" lengthAdjust="spacingAndGlyphs">02</text>
<text x="567.58" y="505.95" font-size="8.2" fill="#777" textLength="7.60" lengthAdjust="spacingAndGlyphs">01</text>
<text x="312.70" y="310.76" font-size="8.5" fill="#404040" font-weight="bold" textLength="24.00" lengthAdjust="spacingAndGlyphs">Month</text>
<text x="314.80" y="517.66" font-size="8.5" fill="#404040" font-weight="bold" textLength="18.00" lengthAdjust="spacingAndGlyphs">Time</text>
<text transform="translate(45.4 241.7) rotate(-90)" font-size="8.5" font-weight="bold" fill="#505050" textLength="65.7" lengthAdjust="spacingAndGlyphs">PcsOutputResult</text>
<text transform="translate(39.9 449) rotate(-90)" font-size="8.5" font-weight="bold" fill="#505050" textLength="66" lengthAdjust="spacingAndGlyphs">PcsOutputResult</text>
<text x="37.70" y="121.98" font-size="10.5" fill="#252423" stroke="#252423" stroke-width="0.35" textLength="145.30" lengthAdjust="spacingAndGlyphs">Month による PcsOutputResult</text>
<text x="31.70" y="329.08" font-size="10.5" fill="#252423" stroke="#252423" stroke-width="0.35" textLength="139.90" lengthAdjust="spacingAndGlyphs">Time による PcsOutputResult</text>
<text x="676.9" y="221.7" font-size="33" fill="#252423" stroke="#252423" stroke-width="0.45" text-anchor="middle" textLength="16.5" lengthAdjust="spacingAndGlyphs">7</text>
<text x="696.0" y="221.7" font-size="33" fill="#252423" stroke="#252423" stroke-width="0.45" text-anchor="middle" textLength="16.5" lengthAdjust="spacingAndGlyphs">5</text>
<text x="709.0" y="221.7" font-size="33" fill="#252423" stroke="#252423" stroke-width="0.45" text-anchor="middle" textLength="8.3" lengthAdjust="spacingAndGlyphs">.</text>
<text x="721.3" y="221.7" font-size="33" fill="#252423" stroke="#252423" stroke-width="0.45" text-anchor="middle" textLength="16.5" lengthAdjust="spacingAndGlyphs">9</text>
<text x="740.5" y="221.7" font-size="33" fill="#252423" stroke="#252423" stroke-width="0.45" text-anchor="middle" textLength="16.5" lengthAdjust="spacingAndGlyphs">7</text>
<text x="672.50" y="239.60" font-size="10" fill="#605e5c" textLength="71.20" lengthAdjust="spacingAndGlyphs">PcsOutputResult</text>
<text x="849.60" y="126.90" font-size="12.5" fill="#252423" font-weight="bold" textLength="52.70" lengthAdjust="spacingAndGlyphs">フィルター</text>
<text x="854.50" y="156.64" font-size="9" fill="#605e5c" textLength="17.20" lengthAdjust="spacingAndGlyphs">検索</text>
<text x="830.70" y="186.84" font-size="9" fill="#605e5c" textLength="95.30" lengthAdjust="spacingAndGlyphs">このページでのフィルター</text>
<text x="844.00" y="213.74" font-size="9" fill="#605e5c" textLength="95.80" lengthAdjust="spacingAndGlyphs">ここにデータ フィールド...</text>
<text x="831.00" y="252.24" font-size="9" fill="#605e5c" textLength="119.50" lengthAdjust="spacingAndGlyphs">すべてのページでのフィルター...</text>
<text x="844.00" y="279.44" font-size="9" fill="#605e5c" textLength="95.80" lengthAdjust="spacingAndGlyphs">ここにデータ フィールド...</text>
<text x="967.50" y="128.42" font-size="12" fill="#252423" font-weight="bold" textLength="31.50" lengthAdjust="spacingAndGlyphs">視覚化</text>
<text x="967.00" y="274.54" font-size="9" fill="#323130" textLength="8.00" lengthAdjust="spacingAndGlyphs">値</text>
<text x="969.00" y="295.54" font-size="9" fill="#323130" textLength="96.00" lengthAdjust="spacingAndGlyphs">ここにデータ フィールド...</text>
<text x="969.00" y="320.32" font-size="12" fill="#323130" font-weight="bold" textLength="63.40" lengthAdjust="spacingAndGlyphs">ドリルスルー</text>
<text x="965.80" y="341.24" font-size="9" fill="#323130" textLength="57.70" lengthAdjust="spacingAndGlyphs">クロス レポート</text>
<text x="971.00" y="361.94" font-size="9" fill="#323130" textLength="16.00" lengthAdjust="spacingAndGlyphs">オフ</text>
<text x="966.00" y="385.54" font-size="9" fill="#323130" textLength="100.60" lengthAdjust="spacingAndGlyphs">すべてのフィルターを保持...</text>
<text x="971.00" y="405.74" font-size="9" fill="#323130" textLength="16.00" lengthAdjust="spacingAndGlyphs">オン</text>
<text x="969.00" y="428.54" font-size="9" fill="#323130" textLength="94.00" lengthAdjust="spacingAndGlyphs">ドリルスルー フィールド...</text>
<text x="1088.40" y="128.82" font-size="12" fill="#252423" font-weight="bold" textLength="52.40" lengthAdjust="spacingAndGlyphs">フィールド</text>
<text x="1106.00" y="156.24" font-size="9" fill="#605e5c" textLength="17.30" lengthAdjust="spacingAndGlyphs">検索</text>
<text x="1112.00" y="184.62" font-size="9.5" fill="#323130" textLength="27.20" lengthAdjust="spacingAndGlyphs">クエリ1</text>
<text x="1125.70" y="204.24" font-size="9" fill="#323130" textLength="47.00" lengthAdjust="spacingAndGlyphs">MakerCorre...</text>
<text x="1125.70" y="220.24" font-size="9" fill="#323130" textLength="23.50" lengthAdjust="spacingAndGlyphs">Month</text>
<text x="1125.70" y="236.24" font-size="9" fill="#323130" textLength="47.00" lengthAdjust="spacingAndGlyphs">PcsConversi...</text>
<text x="1125.70" y="252.24" font-size="9" fill="#323130" textLength="36.00" lengthAdjust="spacingAndGlyphs">PcsOutput</text>
<text x="1125.70" y="268.24" font-size="9" fill="#323130" textLength="47.00" lengthAdjust="spacingAndGlyphs">PcsOutputR...</text>
<text x="1125.70" y="284.24" font-size="9" fill="#323130" textLength="44.90" lengthAdjust="spacingAndGlyphs">PcsRoundOff</text>
<text x="1125.70" y="300.24" font-size="9" fill="#323130" textLength="28.50" lengthAdjust="spacingAndGlyphs">PointNo</text>
<text x="1125.70" y="316.24" font-size="9" fill="#323130" textLength="18.00" lengthAdjust="spacingAndGlyphs">Time</text>
<text x="68.00" y="645.42" font-size="9.5" fill="#605e5c" textLength="29.00" lengthAdjust="spacingAndGlyphs">ページ1</text>
<text x="4.40" y="664.54" font-size="9" fill="#605e5c" textLength="36.60" lengthAdjust="spacingAndGlyphs">ページ 1/1</text></g></svg>
<div class="a" style="left:0;top:0;width:1200px;height:670px;border:1px solid #8a8886;border-top-color:#6b6a69"></div>
</body></html>
